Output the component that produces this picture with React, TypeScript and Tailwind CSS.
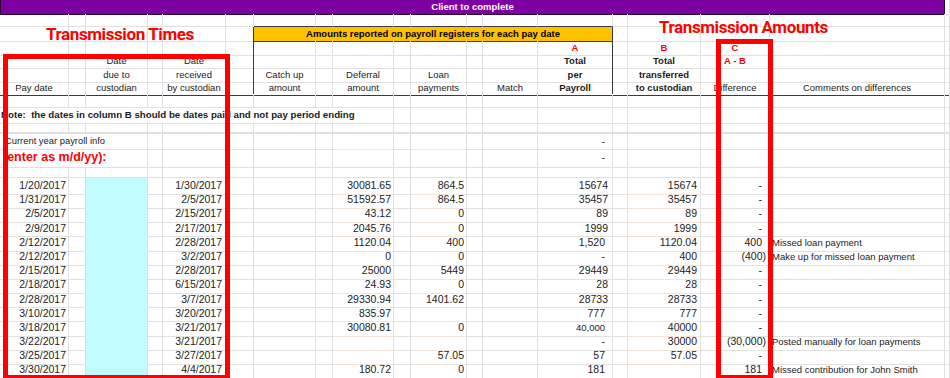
import { clsx } from "clsx";
import { ReactNode } from "react";

// 19 spreadsheet columns, A..S
const COLS =
  "grid grid-cols-[69px_17px_62px_15px_63px_28px_62px_17px_61px_17px_56px_16px_55px_75px_15px_73px_69px_175px_5px]";

const DARK = "border-r-[#3a3a3a]";

function Cell({ children, className }: { children?: ReactNode; className?: string }) {
  return (
    <div
      className={clsx(
        "flex items-center whitespace-nowrap border-r border-b border-[#e0e0e0]",
        className
      )}
    >
      {children}
    </div>
  );
}

function Blank({ n, className }: { n: number; className?: string }) {
  return (
    <>
      {Array.from({ length: n }, (_, i) => (
        <Cell key={i} className={className} />
      ))}
    </>
  );
}

type Pay = {
  pay: string;
  received: string;
  deferral?: string;
  loan?: string;
  total: string;
  totalAcct?: boolean;
  small?: boolean;
  transferred?: string;
  diff: string;
  paren?: boolean;
  comment?: string;
};

const rows: Pay[] = [
  { pay: "1/20/2017", received: "1/30/2017", deferral: "30081.65", loan: "864.5", total: "15674", transferred: "15674", diff: "-" },
  { pay: "1/31/2017", received: "2/5/2017", deferral: "51592.57", loan: "864.5", total: "35457", transferred: "35457", diff: "-" },
  { pay: "2/5/2017", received: "2/15/2017", deferral: "43.12", loan: "0", total: "89", transferred: "89", diff: "-" },
  { pay: "2/9/2017", received: "2/17/2017", deferral: "2045.76", loan: "0", total: "1999", transferred: "1999", diff: "-" },
  { pay: "2/12/2017", received: "2/28/2017", deferral: "1120.04", loan: "400", total: "1,520", totalAcct: true, transferred: "1120.04", diff: "400", comment: "Missed loan payment" },
  { pay: "2/12/2017", received: "3/2/2017", deferral: "0", loan: "0", total: "-", totalAcct: true, transferred: "400", diff: "(400)", paren: true, comment: "Make up for missed loan payment" },
  { pay: "2/15/2017", received: "2/28/2017", deferral: "25000", loan: "5449", total: "29449", transferred: "29449", diff: "-" },
  { pay: "2/18/2017", received: "6/15/2017", deferral: "24.93", loan: "0", total: "28", transferred: "28", diff: "-" },
  { pay: "2/28/2017", received: "3/7/2017", deferral: "29330.94", loan: "1401.62", total: "28733", transferred: "28733", diff: "-" },
  { pay: "3/10/2017", received: "3/20/2017", deferral: "835.97", total: "777", totalAcct: true, transferred: "777", diff: "-" },
  { pay: "3/18/2017", received: "3/21/2017", deferral: "30080.81", loan: "0", total: "40,000", totalAcct: true, small: true, transferred: "40000", diff: "-" },
  { pay: "3/22/2017", received: "3/21/2017", total: "-", totalAcct: true, transferred: "30000", diff: "(30,000)", paren: true, comment: "Posted manually for loan payments" },
  { pay: "3/25/2017", received: "3/27/2017", loan: "57.05", total: "57", totalAcct: true, transferred: "57.05", diff: "-" },
  { pay: "3/30/2017", received: "4/4/2017", deferral: "180.72", loan: "0", total: "181", totalAcct: true, diff: "181", comment: "Missed contribution for John Smith" },
];

const PEACH = "border-b-[#f6e4d8]";

export default function App() {
  return (
    <div className="relative w-[950px] h-[378px] overflow-hidden bg-white font-['Liberation_Sans',Arial,sans-serif] text-[#1c1c1c]">
      {/* row 1: banner */}
      <div className={clsx(COLS, "h-[14px]")}>
        <div className="col-span-18 flex items-center justify-center bg-[#7d00a3] border border-t-0 border-[#2a0a33] text-[9.5px] font-bold text-white">
          Client to complete
        </div>
        <Cell />
      </div>

      {/* row 2 */}
      <div className={clsx(COLS, "h-[13px]")}>
        <Blank n={6} />
        <Blank n={8} className="border-b-[#3a3a3a]" />
        <Blank n={5} />
      </div>

      {/* row 3: orange band */}
      <div className={clsx(COLS, "h-[14px]")}>
        <Blank n={5} />
        <Cell className={DARK} />
        <div className="col-span-8 flex items-center justify-center bg-[#ffc000] border-r border-b border-[#3a3a3a] text-[9.5px] font-bold text-black">
          Amounts reported on payroll registers for each pay date
        </div>
        <Blank n={5} />
      </div>

      {/* header lines */}
      <div className={clsx(COLS, "h-[13px] text-[9.5px]")}>
        <Blank n={5} />
        <Cell className={DARK} />
        <Blank n={7} />
        <Cell className={clsx(DARK, "justify-center font-bold text-[#ff0000]")}>A</Cell>
        <Cell />
        <Cell className="justify-center font-bold text-[#ff0000]">B</Cell>
        <Cell className="justify-center font-bold text-[#ff0000]">C</Cell>
        <Blank n={2} />
      </div>
      <div className={clsx(COLS, "h-[14px] text-[9.5px]")}>
        <Cell />
        <Cell />
        <Cell className="justify-center">Date</Cell>
        <Cell />
        <Cell className="justify-center">Date</Cell>
        <Cell className={DARK} />
        <Blank n={7} />
        <Cell className={clsx(DARK, "justify-center font-bold")}>Total</Cell>
        <Cell />
        <Cell className="justify-center font-bold">Total</Cell>
        <Cell className="justify-center font-bold text-[#ff0000]">A - B</Cell>
        <Blank n={2} />
      </div>
      <div className={clsx(COLS, "h-[13px] text-[9.5px]")}>
        <Cell />
        <Cell />
        <Cell className="justify-center">due to</Cell>
        <Cell />
        <Cell className="justify-center">received</Cell>
        <Cell className={DARK} />
        <Cell className="justify-center">Catch up</Cell>
        <Cell />
        <Cell className="justify-center">Deferral</Cell>
        <Cell />
        <Cell className="justify-center">Loan</Cell>
        <Blank n={2} />
        <Cell className={clsx(DARK, "justify-center font-bold")}>per</Cell>
        <Cell />
        <Cell className="justify-center font-bold">transferred</Cell>
        <Blank n={3} />
      </div>
      <div className={clsx(COLS, "h-[13px] text-[9.5px]")}>
        <Cell className="justify-center border-b-[#3a3a3a]">Pay date</Cell>
        <Cell className="border-b-[#3a3a3a]" />
        <Cell className="justify-center border-b-[#3a3a3a]">custodian</Cell>
        <Cell className="border-b-[#3a3a3a]" />
        <Cell className="justify-center border-b-[#3a3a3a]">by custodian</Cell>
        <Cell className={clsx(DARK, "border-b-[#3a3a3a]")} />
        <Cell className="justify-center border-b-[#3a3a3a]">amount</Cell>
        <Cell className="border-b-[#3a3a3a]" />
        <Cell className="justify-center border-b-[#3a3a3a]">amount</Cell>
        <Cell className="border-b-[#3a3a3a]" />
        <Cell className="justify-center border-b-[#3a3a3a]">payments</Cell>
        <Cell className="border-b-[#3a3a3a]" />
        <Cell className="justify-center border-b-[#3a3a3a]">Match</Cell>
        <Cell className={clsx(DARK, "justify-center font-bold border-b-[#3a3a3a]")}>Payroll</Cell>
        <Cell className="border-b-[#3a3a3a]" />
        <Cell className="justify-center font-bold border-b-[#3a3a3a]">to custodian</Cell>
        <Cell className="justify-center border-b-[#3a3a3a]">Difference</Cell>
        <Cell className="justify-center border-b-[#3a3a3a]">Comments on differences</Cell>
        <Cell className="border-b-[#3a3a3a]" />
      </div>

      <div className={clsx(COLS, "h-[14px]")}>
        <Blank n={19} />
      </div>

      {/* note */}
      <div className={clsx(COLS, "h-[14px]")}>
        <Cell className="col-span-9 whitespace-pre text-[9.7px] font-bold pl-px">
          Note:  the dates in column B should be dates paid and not pay period ending
        </Cell>
        <Blank n={10} />
      </div>

      <div className={clsx(COLS, "h-[12px] border-b border-[#e0e0e0]")}>
        <Blank n={19} />
      </div>

      <div className={clsx(COLS, "h-[14px]")}>
        <Cell className="col-span-3 text-[9.4px] pl-[5px]">Current year payroll info</Cell>
        <Blank n={5} />
        <Cell className={PEACH} />
        <Cell />
        <Cell className={PEACH} />
        <Blank n={2} />
        <Cell className="justify-end pr-[7px] text-[10px]">-</Cell>
        <Blank n={5} />
      </div>

      <div className={clsx(COLS, "h-[18px]")}>
        <Cell className="col-span-3 text-[12.5px] font-bold text-[#ff0000] pl-[3px]">(enter as m/d/yy):</Cell>
        <Blank n={10} />
        <Cell className="justify-end pr-[7px] text-[10px]">-</Cell>
        <Blank n={5} />
      </div>

      <div className={clsx(COLS, "h-[12px]")}>
        <Blank n={19} />
      </div>

      {/* payroll rows */}
      {rows.map((r, i) => (
        <div key={i} className={clsx(COLS, "h-[14.2px] text-[10.5px]")}>
          <Cell className="justify-end pr-[2px]">{r.pay}</Cell>
          <Cell />
          <Cell className="bg-[#c2fbfd] border-b-[#c2fbfd]" />
          <Cell />
          <Cell className="justify-end pr-[3px]">{r.received}</Cell>
          <Blank n={3} />
          <Cell className={clsx("justify-end pr-[2px]", PEACH)}>{r.deferral}</Cell>
          <Cell />
          <Cell className={clsx("justify-end pr-[2px]", PEACH)}>{r.loan}</Cell>
          <Blank n={2} />
          <Cell
            className={clsx(
              "justify-end",
              r.totalAcct ? "pr-[7px]" : "pr-[4px]",
              r.small && "text-[9.5px]"
            )}
          >
            {r.total}
          </Cell>
          <Cell />
          <Cell className={clsx("justify-end pr-[3px]", PEACH)}>{r.transferred}</Cell>
          <Cell className={clsx("justify-end", r.paren ? "pr-[3px]" : "pr-[7px]")}>{r.diff}</Cell>
          <Cell className="pl-[2px] text-[9.5px]">{r.comment}</Cell>
          <Cell />
        </div>
      ))}

      {/* annotations drawn over the sheet */}
      <div className="absolute left-[46px] top-[26px] text-[17px] leading-none font-bold tracking-[-0.4px] text-[#ff0000] font-['Roboto',sans-serif]">
        Transmission Times
      </div>
      <div className="absolute left-[659px] top-[19px] text-[17px] leading-none font-bold tracking-[-0.4px] text-[#ff0000] font-['Roboto',sans-serif]">
        Transmission Amounts
      </div>
      <div className="absolute left-[3px] top-[54px] w-[227px] h-[326px] border-[5px] border-[#ff0000]" />
      <div className="absolute left-[716px] top-[39px] w-[57px] h-[341px] border-[5px] border-[#ff0000]" />
    </div>
  );
}
